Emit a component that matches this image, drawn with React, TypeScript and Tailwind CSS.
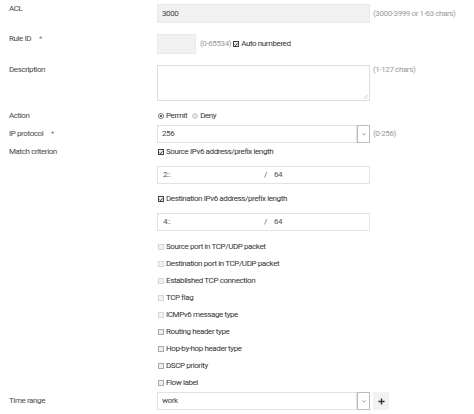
import React from 'react';

const font = { fontFamily: 'Roboto, "Liberation Sans", sans-serif' };

function Check({ on, light }: { on?: boolean; light?: boolean }) {
  if (on) {
    return (
      <span className="inline-flex w-[6px] h-[6px] items-center justify-center border border-[#444] bg-[#eee] shrink-0">
        <svg viewBox="0 0 8 8" className="w-[5px] h-[5px]">
          <path d="M1 4.2 L3 6.2 L7 1.5" fill="none" stroke="#222" strokeWidth="1.8" />
        </svg>
      </span>
    );
  }
  return (
    <span
      className={`inline-block w-[6px] h-[6px] border shrink-0 ${
        light ? 'border-[#d6d6d6] bg-[#f2f2f2]' : 'border-[#aaa] bg-[#eee]'
      }`}
    />
  );
}

function Radio({ on }: { on?: boolean }) {
  return (
    <span
      className={`inline-flex w-[6px] h-[6px] rounded-full border items-center justify-center shrink-0 ${
        on ? 'border-[#777] bg-white' : 'border-[#ccc] bg-[#e6e6e6]'
      }`}
    >
      {on && <span className="w-[2px] h-[2px] rounded-full bg-[#333]" />}
    </span>
  );
}

function Label({ text, req }: { text: string; req?: boolean }) {
  return (
    <div className="w-[157px] pl-[9px] shrink-0 text-[#4a4a4a] flex items-center">
      <span>{text}</span>
      {req && <span className="ml-[8px] text-[#d04a4a] text-[7px]">*</span>}
    </div>
  );
}

function Hint({ children }: { children: React.ReactNode }) {
  return <span className="text-[#999] ml-[3px]">{children}</span>;
}

function SelectBox({ value }: { value: string }) {
  return (
    <div className="flex h-[18px]">
      <div className="w-[200px] h-full border border-[#e2e2e2] bg-white flex items-center pl-[4px] text-[#444]">
        {value}
      </div>
      <div className="w-[13px] h-full border border-[#bbb] bg-white flex items-center justify-center">
        <svg viewBox="0 0 6 4" className="w-[4px] h-[3px]">
          <path d="M0.5 0.5 L3 3 L5.5 0.5" fill="none" stroke="#666" strokeWidth="1" />
        </svg>
      </div>
    </div>
  );
}

function Prefix({ addr }: { addr: string }) {
  return (
    <div className="flex">
      <div className="w-[157px] shrink-0" />
      <div className="w-[213px] h-[18px] border border-[#e2e2e2] bg-white flex items-center text-[#555]">
        <span className="pl-[5px] w-[106px]">{addr}</span>
        <span>/</span>
        <span className="ml-[7px]">64</span>
      </div>
    </div>
  );
}

const options = [
  { text: 'Source port in TCP/UDP packet', light: true },
  { text: 'Destination port in TCP/UDP packet', light: true },
  { text: 'Established TCP connection', light: true },
  { text: 'TCP flag', light: true },
  { text: 'ICMPv6 message type', light: true },
  { text: 'Routing header type', light: false },
  { text: 'Hop-by-hop header type', light: false },
  { text: 'DSCP priority', light: false },
  { text: 'Flow label', light: false },
];

export default function App() {
  return (
    <div className="w-[474px] h-[414px] bg-white text-[8px] leading-[10px] tracking-[-0.4px] overflow-hidden" style={font}>
      {/* ACL */}
      <div className="flex items-start mt-[4px] h-[19px]">
        <Label text="ACL" />
        <div className="w-[213px] h-[19px] bg-[#f1f1f1] border border-[#e9e9e9] flex items-center pl-[4px] text-[#444]">
          3000
        </div>
        <Hint>
          <span className="leading-[19px]">(3000-3999 or 1-63 chars)</span>
        </Hint>
      </div>

      {/* Rule ID */}
      <div className="flex items-start mt-[11px] h-[20px]">
        <Label text="Rule ID" req />
        <div className="w-[39px] h-[20px] bg-[#f1f1f1] border border-[#e9e9e9]" />
        <div className="flex items-center h-[20px] ml-[4px] gap-[2px]">
          <span className="text-[#999]">(0-65534)</span>
          <Check on />
          <span className="text-[#333]">Auto numbered</span>
        </div>
      </div>

      {/* Description */}
      <div className="flex items-start mt-[11px]">
        <Label text="Description" />
        <div className="relative w-[213px] h-[36px] border border-[#dedede] bg-white">
          <svg viewBox="0 0 6 6" className="absolute right-[1px] bottom-[1px] w-[5px] h-[5px]">
            <path d="M1 5.5 L5.5 1 M3.5 5.5 L5.5 3.5" stroke="#aaa" strokeWidth="0.8" />
          </svg>
        </div>
        <span className="text-[#999] ml-[3px]">(1-127 chars)</span>
      </div>

      {/* Action */}
      <div className="flex items-center mt-[9px] h-[12px]">
        <Label text="Action" />
        <div className="flex items-center gap-[2px] pl-[1px] text-[#333]">
          <Radio on />
          <span>Permit</span>
          <span className="w-[1px]" />
          <Radio />
          <span>Deny</span>
        </div>
      </div>

      {/* IP protocol */}
      <div className="flex items-center mt-[3px] h-[18px]">
        <Label text="IP protocol" req />
        <SelectBox value="256" />
        <Hint>(0-256)</Hint>
      </div>

      {/* Match criterion */}
      <div className="flex items-center mt-[3px] h-[12px]">
        <Label text="Match criterion" />
        <div className="flex items-center gap-[2px] pl-[1px] text-[#333]">
          <Check on />
          <span>Source IPv6 address/prefix length</span>
        </div>
      </div>
      <div className="mt-[8px]">
        <Prefix addr="2::" />
      </div>

      <div className="flex items-center mt-[9px] h-[12px]">
        <div className="w-[157px] shrink-0" />
        <div className="flex items-center gap-[2px] pl-[1px] text-[#333]">
          <Check on />
          <span>Destination IPv6 address/prefix length</span>
        </div>
      </div>
      <div className="mt-[8px]">
        <Prefix addr="4::" />
      </div>

      {/* Other criteria */}
      <div className="mt-[7px] flex flex-col">
        {options.map((o) => (
          <div key={o.text} className="flex items-center h-[17px]">
            <div className="w-[157px] shrink-0" />
            <div className="flex items-center gap-[2px] pl-[1px] text-[#333]">
              <Check light={o.light} />
              <span>{o.text}</span>
            </div>
          </div>
        ))}
      </div>

      {/* Time range */}
      <div className="flex items-center mt-[1px] h-[18px]">
        <Label text="Time range" />
        <SelectBox value="work" />
        <div className="ml-[3px] w-[16px] h-[18px] bg-[#f2f2f2] flex items-center justify-center">
          <svg viewBox="0 0 8 8" className="w-[7px] h-[7px]">
            <path d="M4 0.5 V7.5 M0.5 4 H7.5" stroke="#333" strokeWidth="1.6" />
          </svg>
        </div>
      </div>
    </div>
  );
}
